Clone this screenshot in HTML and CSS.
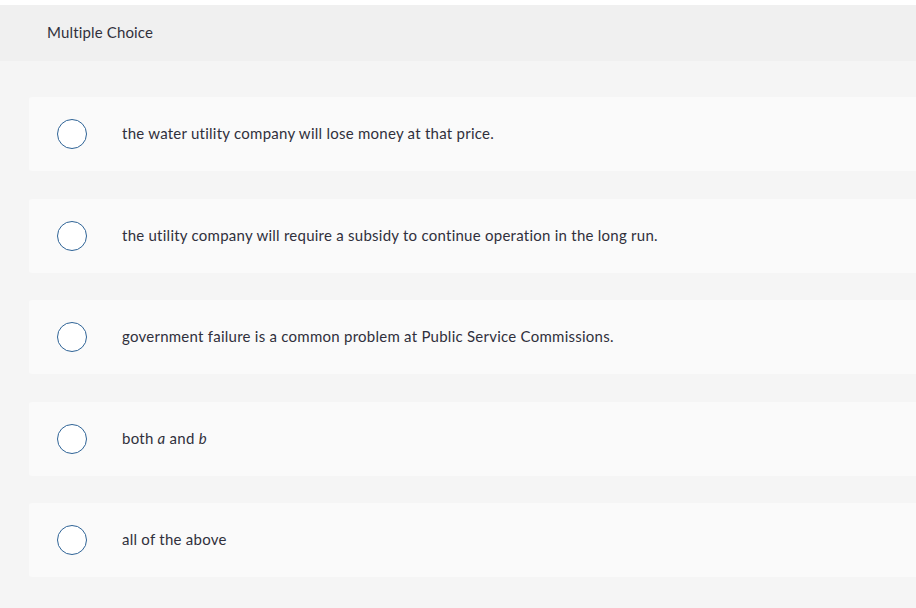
FILE: index.html
```html
<!DOCTYPE html>
<html>
<head>
<meta charset="utf-8">
<link rel="stylesheet" href="styles.css">
</head>
<body>
<div class="page">
  <div class="header">Multiple Choice</div>
  <div class="choices">
    <div class="card"><span class="radio"></span><span class="label">the water utility company will lose money at that price.</span></div>
    <div class="card"><span class="radio"></span><span class="label">the utility company will require a subsidy to continue operation in the long run.</span></div>
    <div class="card"><span class="radio"></span><span class="label">government failure is a common problem at Public Service Commissions.</span></div>
    <div class="card"><span class="radio"></span><span class="label">both <i>a</i> and <i>b</i></span></div>
    <div class="card"><span class="radio"></span><span class="label">all of the above</span></div>
  </div>
</div>
</body>
</html>
```
FILE: styles.css
```css
html, body {
  margin: 0;
  padding: 0;
  background: #ffffff;
}
body {
  font-family: Lato, "Liberation Sans", sans-serif;
  color: #333333;
  height: 608px;
  overflow: hidden;
}
.page {
  margin-top: 5px;
  background: #f5f5f5;
  height: 603px;
}
.header {
  background: #f0f0f0;
  height: 56px;
  box-sizing: border-box;
  padding-left: 47px;
  padding-bottom: 2px;
  display: flex;
  align-items: center;
  font-size: 15px;
  letter-spacing: 0.15px;
  color: #30303c;
}
.choices {
  padding: 36px 0 0 29px;
  display: flex;
  flex-direction: column;
  gap: 27.5px;
}
.card {
  background: #fafafa;
  height: 74px;
  border-radius: 3px 0 0 3px;
  display: flex;
  align-items: center;
  padding-left: 28px;
}
.radio {
  width: 28px;
  height: 28px;
  border: 1.5px solid #2e6396;
  border-radius: 50%;
  background: #ffffff;
  flex: none;
}
.label {
  margin-left: 35px;
  padding-bottom: 2px;
  font-size: 15px;
  letter-spacing: 0.25px;
  color: #30303c;
}
.label i {
  font-style: italic;
}
```
